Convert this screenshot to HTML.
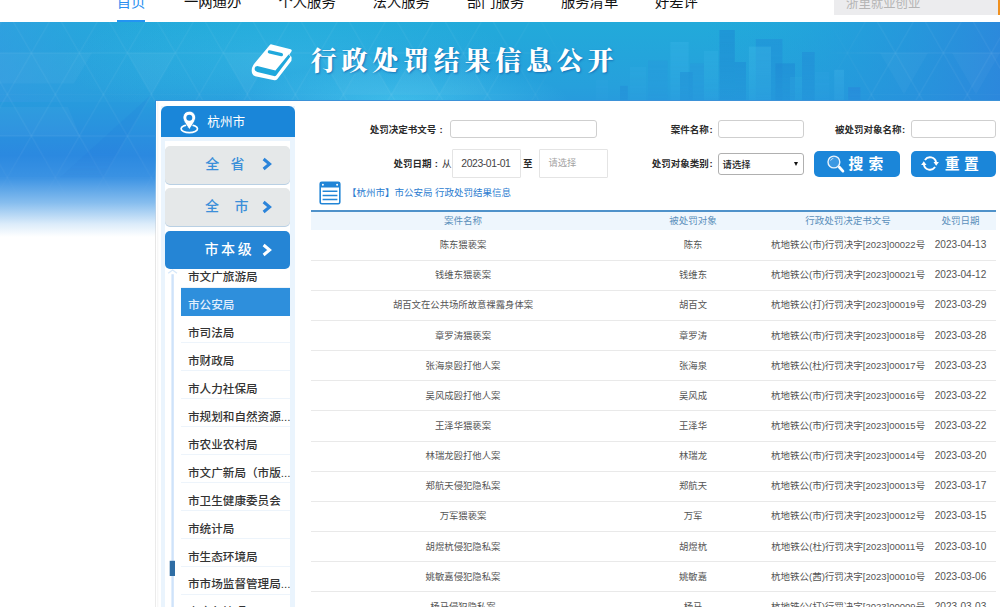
<!DOCTYPE html>
<html lang="zh-CN">
<head>
<meta charset="utf-8">
<title>行政处罚结果信息公开</title>
<style>
*{box-sizing:border-box;margin:0;padding:0}
html,body{width:1000px;height:607px;overflow:hidden;background:#fff}
body{position:relative;font-family:"Liberation Sans","Noto Sans CJK SC",sans-serif;color:#333;font-size:9.6px}
.abs{position:absolute}
/* top nav */
#nav{position:absolute;left:0;top:0;width:1000px;height:22px;background:#fff;overflow:hidden}
#nav a{position:absolute;top:-8.1px;font-size:14.3px;line-height:20px;color:#111;white-space:nowrap;text-decoration:none}
#nav a.on{color:#2b8ff0}
#nav .ul{position:absolute;left:117.1px;top:20.2px;width:27.8px;height:2px;background:#2394f2}
#nav .sbox{position:absolute;left:834px;top:-8.8px;width:164px;height:23.8px;background:#ececee;color:#b4b4b4;font-size:12.4px;line-height:23px;padding-left:12px;padding-top:2px}
#nav .obar{position:absolute;left:998px;top:0;width:2px;height:15px;background:#f0901e}
/* banner */
#banner{position:absolute;left:0;top:22px;width:1000px;height:215px;overflow:hidden}
#title{position:absolute;left:310.8px;top:39.2px;font-family:"Liberation Serif","Noto Serif CJK SC",serif;font-weight:900;font-size:26px;letter-spacing:4.75px;color:#fff;line-height:46px;white-space:nowrap;text-shadow:1px 1px 2px rgba(10,70,150,.55)}
/* panel */
#panel{position:absolute;left:156px;top:99.5px;width:860px;height:520px;background:#fff;border-top:1.5px solid #3d92d8;border-left:0}
/* sidebar */
#side{position:absolute;left:160.5px;top:106px;width:134px;height:520px;background:#eaf4fd}
#side .hd{position:absolute;left:0;top:0;width:134px;height:31px;background:#1a86d9;border-radius:6px 6px 0 0;color:#fff;font-size:12.6px;line-height:31px}
#side .hd span{position:absolute;left:46.8px;top:1.2px}
#side .in{position:absolute;left:4.5px;top:35px;width:125px;height:480px;background:#fff}
.lv{position:absolute;left:165px;width:125px;height:38px;border-radius:5px;background:#e5e8e9;box-shadow:0 1px 0 #b9d0e4;color:#3b8fd9;font-size:14px;line-height:38px;font-weight:500}
.lv.on{background:#2585d5;color:#fff;box-shadow:none}
.lv b{position:absolute;top:-1px;font-weight:500}
.lv svg{position:absolute;left:97px;top:12.6px;overflow:visible}
#list{position:absolute;left:181px;top:259.7px;width:109px}
#list div{height:27.92px;border-bottom:1px solid #edf4fb;padding:7.8px 0 0 7px;font-size:11.6px;line-height:19px;color:#333;white-space:nowrap;overflow:hidden;font-weight:500}
#list div.on{background:#2e8fdc;color:#e0eefc;border-bottom-color:#2e8fdc}
/* form */
.lab{position:absolute;font-size:9.5px;font-weight:700;color:#2b2b2b;white-space:nowrap;line-height:14px;text-align:right}
.lab i{font-style:normal;display:inline-block;width:3.8px;text-align:right}
.lab i.fw{width:9.5px;text-align:center}
.inp{position:absolute;height:18px;top:120.4px;border:1px solid #cfcfcf;border-radius:3px;background:#fff}
.dinp{position:absolute;top:149px;width:69px;height:29px;border:1px solid #e4e4e4;border-radius:1px;background:#fff;font-size:9.8px;line-height:27px;padding-left:8px;color:#444}
.btn{position:absolute;top:151px;height:25.6px;border-radius:5px;background:#1b86d9;color:#fff;font-weight:700;font-size:14.8px;line-height:25px}
.btn span{position:absolute;top:.6px}
/* table */
#tb{position:absolute;left:311px;top:210px;width:685px;border-collapse:collapse;table-layout:fixed;border-top:2px solid #4f92ca}
#tb th{height:18.4px;background:#eef6fd;color:#5a8fbb;font-weight:400;font-size:9.5px;text-align:center;padding:0;line-height:18px}
#tb td:nth-child(4){font-size:10.1px}
#tb td:nth-child(1),#tb td:nth-child(2){font-size:9.35px}
#tb td{height:30.17px;border-bottom:1px solid #e9e9e9;text-align:center;font-size:9.5px;color:#555;padding:0;white-space:nowrap;line-height:14px}
</style>
</head>
<body>
<div id="banner">
<svg width="1000" height="215" viewBox="0 0 1000 215">
<defs>
<linearGradient id="bg" x1="0" y1="0" x2="0" y2="1">
<stop offset="0" stop-color="#22aada"/><stop offset="0.3" stop-color="#26a0dc"/><stop offset="0.62" stop-color="#2b89e0"/><stop offset="0.72" stop-color="#3a92e3"/><stop offset="0.84" stop-color="#86bdee"/><stop offset="0.94" stop-color="#dcecfa"/><stop offset="1" stop-color="#ffffff"/>
</linearGradient>
<linearGradient id="bh" x1="0" y1="0" x2="1" y2="0">
<stop offset="0" stop-color="#3a98e4" stop-opacity=".5"/><stop offset="0.25" stop-color="#22acd8" stop-opacity="0"/><stop offset="0.7" stop-color="#1fa6dc" stop-opacity="0"/><stop offset="0.85" stop-color="#2493dc" stop-opacity=".45"/><stop offset="1" stop-color="#2d84dc" stop-opacity=".85"/>
</linearGradient>
<linearGradient id="fade" x1="0" y1="0" x2="0" y2="1">
<stop offset="0" stop-color="#fff" stop-opacity="1"/><stop offset="0.6" stop-color="#fff" stop-opacity="1"/><stop offset="0.85" stop-color="#fff" stop-opacity="0"/>
</linearGradient>
<pattern id="tri" x="31.4" y="31" width="48" height="83" patternUnits="userSpaceOnUse">
<path d="M0 0H48M0 83H48" stroke="#fff" stroke-opacity=".07" stroke-width="1" fill="none"/>
<path d="M0 0L48 83M48 0L0 83" stroke="#fff" stroke-opacity=".07" stroke-width="1" fill="none"/>
<path d="M0 41.5H48" stroke="#fff" stroke-opacity=".02" stroke-width="1" fill="none"/>
</pattern>
<linearGradient id="cg" x1="0" y1="0" x2="0" y2="1"><stop offset="0" stop-color="#fff"/><stop offset=".55" stop-color="#fff" stop-opacity=".8"/><stop offset="1" stop-color="#fff" stop-opacity=".35"/></linearGradient>
<mask id="cm"><rect x="580" y="0" width="320" height="80" fill="url(#cg)"/></mask>
<linearGradient id="pf" x1="0" y1="0" x2="1" y2="0"><stop offset="0" stop-color="#fff"/><stop offset=".5" stop-color="#fff"/><stop offset=".58" stop-color="#fff" stop-opacity="0"/><stop offset=".82" stop-color="#fff" stop-opacity="0"/><stop offset=".88" stop-color="#fff"/><stop offset="1" stop-color="#fff"/></linearGradient>
<mask id="pm"><rect width="1000" height="215" fill="url(#pf)"/></mask>
<mask id="fm"><rect width="1000" height="215" fill="url(#fade)"/></mask>
<radialGradient id="glow" cx="0.5" cy="0.5" r="0.5"><stop offset="0" stop-color="#4fd3f2" stop-opacity=".55"/><stop offset="1" stop-color="#4fd3f2" stop-opacity="0"/></radialGradient>
</defs>
<rect width="1000" height="215" fill="url(#bg)"/>
<rect width="1000" height="80" fill="url(#bh)"/>
<ellipse cx="400" cy="80" rx="170" ry="38" fill="url(#glow)"/>
<ellipse cx="290" cy="40" rx="230" ry="60" fill="url(#glow)" opacity=".45"/>
<g mask="url(#fm)">
<rect width="1000" height="215" fill="url(#tri)" mask="url(#pm)"/>
<path d="M0 31H92L74 61.5H0Z M0 85H68L80 114H0Z" fill="#fff" fill-opacity=".035"/>
<path d="M127.4 31L151.4 72.5L175.4 31Z M223.4 31L247.4 72.5L271.4 31Z M343.4 72.5L367.4 31L391.4 72.5Z M391.4 72.5L415.4 31L439.4 72.5Z" fill="#fff" fill-opacity=".04"/>
<path d="M319.4 31L343.4 72.5L367.4 31Z M439.4 72.5L463.4 31L487.4 72.5Z M880 31L904 72.5L928 31Z M952 31L976 72.5L1000 31Z" fill="#fff" fill-opacity=".03"/>
<path d="M151.4 72.5L103.4 155.5L60 155.5Z" fill="#1f6fd8" fill-opacity=".10"/>
</g>
<g id="city" mask="url(#cm)" opacity=".8">
<rect x="719.4" y="8" width="15.4" height="70" fill="#1b7fd0" fill-opacity=".55"/>
<rect x="755.8" y="17" width="26.6" height="61" fill="#2084d6" fill-opacity=".5"/>
<rect x="802" y="30" width="12.6" height="48" fill="#1f80d4" fill-opacity=".5"/>
<rect x="670.4" y="20" width="18.2" height="58" fill="#3fb6ea" fill-opacity=".4"/>
<rect x="648" y="38.6" width="19.6" height="39.4" fill="#2793db" fill-opacity=".45"/>
<rect x="680" y="50" width="12.8" height="28" fill="#1d7fd2" fill-opacity=".55"/>
<rect x="690" y="41.4" width="14" height="36.6" fill="#2a90dc" fill-opacity=".45"/>
<rect x="704" y="28.8" width="14" height="49.2" fill="#3cb7e8" fill-opacity=".35"/>
<rect x="734.8" y="40" width="11.2" height="38" fill="#1c7bd0" fill-opacity=".5"/>
<rect x="748.8" y="24.6" width="22.2" height="53.4" fill="#4cc3ee" fill-opacity=".35"/>
<rect x="775.4" y="41.4" width="19.6" height="36.6" fill="#1b78cf" fill-opacity=".5"/>
<rect x="834.2" y="47.8" width="9.8" height="30.2" fill="#4ab8ec" fill-opacity=".45"/>
<rect x="848.2" y="65.2" width="12.1" height="12.8" fill="#2a78d8" fill-opacity=".8"/>
<rect x="620" y="63.8" width="7.8" height="14.2" fill="#2079d2" fill-opacity=".6"/>
<rect x="630" y="45" width="16" height="33" fill="#3ab0e6" fill-opacity=".3"/>
<rect x="790" y="55" width="12" height="23" fill="#3ab0e6" fill-opacity=".3"/>
<rect x="815" y="50" width="14" height="28" fill="#3aa8e6" fill-opacity=".25"/>
<rect x="596" y="58" width="12" height="20" fill="#3aa8e6" fill-opacity=".3"/>
</g>
<g id="book" transform="translate(0,-22)">
<path d="M269.6 45.2Q270.3 44 271.8 44.4L290.6 49.3Q292.4 49.9 291.4 51.4L289.3 54.8L291.2 56.4Q291.7 56.9 291.6 58L291.5 60.2Q291.4 60.9 290.9 61.5L277.2 79.2Q276 80.6 274.4 80.3L255.2 76.3Q253 75.6 252.2 73.4Q250.8 69.4 253.2 65.3Q253.8 64.3 254.6 63.2Z" fill="#fff"/>
<path d="M257.3 66L275.4 70.6L288.6 54.4L290.4 56.6L276.3 75.2Q275.4 76.4 274 76.1L257.3 71.9Q254.6 71 254.6 68.9Q254.7 66.3 257.3 66Z" fill="#1fa8dc"/>
<path d="M269.4 51.9L281.4 54.6" fill="none" stroke="#1fa8dc" stroke-width="3.3" stroke-linecap="round"/>
</g>
</svg>
</div>
<div id="nav">
<a class="on" style="left:116.8px">首页</a>
<a style="left:184px">一网通办</a>
<a style="left:278.5px">个人服务</a>
<a style="left:372.6px">法人服务</a>
<a style="left:467px">部门服务</a>
<a style="left:561px">服务清单</a>
<a style="left:655px">好差评</a>
<div class="ul"></div>
<div class="sbox">浙里就业创业</div>
<div class="obar"></div>
</div>
<div id="title">行政处罚结果信息公开</div>
<div id="panel"></div><div class="abs" style="left:155.2px;top:99.5px;width:1.3px;height:510px;background:linear-gradient(#2b8ed8 0,#3f97dc 60px,#9ec6ea 100px,#e6e6e6 135px,#ebebeb 100%)"></div><div class="abs" style="left:156.5px;top:101px;width:2px;height:510px;background:linear-gradient(90deg,rgba(0,0,0,.045),rgba(0,0,0,0))"></div>
<div id="side">
<div class="hd"><svg style="position:absolute;left:18.4px;top:4px" width="21" height="25" viewBox="0 0 21 25"><ellipse cx="10.3" cy="18.8" rx="8.2" ry="3.9" fill="none" stroke="#fff" stroke-width="1.7"/><path d="M10.3 1.2C6.7 1.2 4 3.9 4 7.5C4 10.9 6.9 14 10.3 19.8C13.7 14 16.6 10.9 16.6 7.5C16.6 3.9 13.9 1.2 10.3 1.2Z" fill="#fff" stroke="#1a86d9" stroke-width=".9"/><circle cx="10.3" cy="7.7" r="3" fill="#1a86d9"/></svg><span>杭州市</span></div>
<div class="in"></div>
</div>
<div class="lv" style="top:145.6px"><b style="left:40.2px">全</b><b style="left:65.5px">省</b><svg width="10" height="12" viewBox="0 0 10 12"><path d="M1.6 1 L7.6 6 L1.6 11" fill="none" stroke="#2b84da" stroke-width="3"/></svg></div>
<div class="lv" style="top:188.4px"><b style="left:40px">全</b><b style="left:69.5px">市</b><svg width="10" height="12" viewBox="0 0 10 12"><path d="M1.6 1 L7.6 6 L1.6 11" fill="none" stroke="#2b84da" stroke-width="3"/></svg></div>
<div id="list">
<div>市文广旅游局</div>
<div class="on">市公安局</div>
<div>市司法局</div>
<div>市财政局</div>
<div>市人力社保局</div>
<div>市规划和自然资源...</div>
<div>市农业农村局</div>
<div>市文广新局（市版...</div>
<div>市卫生健康委员会</div>
<div>市统计局</div>
<div>市生态环境局</div>
<div>市市场监督管理局...</div>
<div>市应急管理局</div>
</div>
<svg class="abs" style="left:319px;top:180.5px" width="22" height="24" viewBox="0 0 22 24"><rect x="1.2" y="1.2" width="19.6" height="21.6" rx="1.6" fill="#fff" stroke="#2285d6" stroke-width="1.6"/><path d="M1.2 2.4Q1.2 1.2 2.4 1.2H19.6Q20.8 1.2 20.8 2.4V6.4H1.2Z" fill="#2285d6"/><circle cx="3.9" cy="3.7" r="1" fill="#fff"/><circle cx="18.1" cy="3.7" r="1" fill="#fff"/><path d="M3.6 10.2H18.4M3.6 14.4H18.4M3.6 18.6H18.4" stroke="#2285d6" stroke-width="1.5" fill="none"/></svg>
<svg class="abs" style="left:166px;top:268px" width="14" height="340" viewBox="0 0 14 340"><path d="M2.2 5.2L6.6 2L11 5.2" fill="none" stroke="#d6e8fa" stroke-width="1.4"/><rect x="5.4" y="6.2" width="2.4" height="334" fill="#cfe3fa"/><rect x="3.7" y="292.8" width="5.3" height="15.2" fill="#2e6da4"/></svg>
<div class="lv on" style="top:231px"><b style="left:39.5px;letter-spacing:2.6px">市本级</b><svg width="10" height="12" viewBox="0 0 10 12"><path d="M1.6 1 L7.6 6 L1.6 11" fill="none" stroke="#fff" stroke-width="3"/></svg></div>

<div class="lab" style="left:340px;width:105.8px;top:122.8px">处罚决定书文号<i class="fw">:</i></div>
<div class="inp" style="left:450.4px;width:146.6px"></div>
<div class="lab" style="left:612px;width:100.6px;top:122.8px">案件名称<i>:</i></div>
<div class="inp" style="left:718px;width:85.6px"></div>
<div class="lab" style="left:805px;width:100.2px;top:122.8px">被处罚对象名称<i>:</i></div>
<div class="inp" style="left:911px;width:84.6px"></div>

<div class="lab" style="left:340px;width:101px;top:156.5px">处罚日期<i class="fw">:</i></div>
<div class="lab" style="left:442px;top:156.5px;font-weight:400">从</div>
<div class="dinp" style="left:452.3px;font-size:10.4px;letter-spacing:-.4px">2023-01-01</div>
<div class="lab" style="left:523px;top:156.5px">至</div>
<div class="dinp" style="left:539.4px;color:#a3a3a3;font-size:9.3px">请选择</div>
<div class="lab" style="left:612px;width:100.6px;top:157.2px">处罚对象类别<i>:</i></div>
<div class="inp" style="left:718px;width:85.6px;top:152.6px;height:22.8px;border-color:#b0b0b0"><span style="position:absolute;left:3.5px;top:4px;font-size:9.4px;font-weight:500;color:#222;line-height:14px">请选择</span><span style="position:absolute;left:74.5px;top:8.2px;width:0;height:0;border-left:2.3px solid transparent;border-right:2.3px solid transparent;border-top:4.2px solid #111"></span></div>
<div class="btn" style="left:814.4px;width:85.2px"><svg style="position:absolute;left:11px;top:3px" width="22" height="20" viewBox="0 0 22 20"><circle cx="8.9" cy="8" r="5.9" fill="#3b98e2" stroke="#e8f3fc" stroke-width="1.4"/><path d="M5.6 6.6A3.6 3.6 0 0 1 8.4 4.3" fill="none" stroke="#cfe6f8" stroke-width=".9"/><path d="M14.4 13.2L17.9 17.1" stroke="#fff" stroke-width="2.8" stroke-linecap="round"/></svg><span style="left:34.2px">搜</span><span style="left:54.1px">索</span></div>
<div class="btn" style="left:911px;width:85px"><svg style="position:absolute;left:9px;top:3.25px" width="20" height="19" viewBox="0 0 20 19"><path d="M4.92 5.94A6.2 6.2 0 0 1 16.11 8.42" fill="none" stroke="#fff" stroke-width="1.9"/><path d="M15.08 13.06A6.2 6.2 0 0 1 3.89 10.58" fill="none" stroke="#fff" stroke-width="1.9"/><path d="M13.5 8L18.9 8L16.2 11.8Z" fill="#fff"/><path d="M1.1 11L6.5 11L3.8 7.2Z" fill="#fff"/></svg><span style="left:33.7px">重</span><span style="left:53.1px">置</span></div>

<div class="abs" style="left:351.4px;top:186.2px;font-size:9.5px;color:#2b7cd0;white-space:nowrap;line-height:14px"><span style="margin-left:-4.5px">【</span>杭州市】市公安局 行政处罚结果信息</div>

<table id="tb">
<colgroup><col style="width:304px"><col style="width:156px"><col style="width:154px"><col style="width:71px"></colgroup>
<tr><th>案件名称</th><th>被处罚对象</th><th>行政处罚决定书文号</th><th>处罚日期</th></tr>
<tr><td>陈东猥亵案</td><td>陈东</td><td>杭地铁公(市)行罚决字[2023]00022号</td><td>2023-04-13</td></tr>
<tr><td>钱维东猥亵案</td><td>钱维东</td><td>杭地铁公(市)行罚决字[2023]00021号</td><td>2023-04-12</td></tr>
<tr><td>胡百文在公共场所故意裸露身体案</td><td>胡百文</td><td>杭地铁公(打)行罚决字[2023]00019号</td><td>2023-03-29</td></tr>
<tr><td>章罗涛猥亵案</td><td>章罗涛</td><td>杭地铁公(市)行罚决字[2023]00018号</td><td>2023-03-28</td></tr>
<tr><td>张海泉殴打他人案</td><td>张海泉</td><td>杭地铁公(杜)行罚决字[2023]00017号</td><td>2023-03-23</td></tr>
<tr><td>吴风成殴打他人案</td><td>吴风成</td><td>杭地铁公(市)行罚决字[2023]00016号</td><td>2023-03-22</td></tr>
<tr><td>王泽华猥亵案</td><td>王泽华</td><td>杭地铁公(市)行罚决字[2023]00015号</td><td>2023-03-22</td></tr>
<tr><td>林瑞龙殴打他人案</td><td>林瑞龙</td><td>杭地铁公(市)行罚决字[2023]00014号</td><td>2023-03-20</td></tr>
<tr><td>郑航天侵犯隐私案</td><td>郑航天</td><td>杭地铁公(市)行罚决字[2023]00013号</td><td>2023-03-17</td></tr>
<tr><td>万军猥亵案</td><td>万军</td><td>杭地铁公(市)行罚决字[2023]00012号</td><td>2023-03-15</td></tr>
<tr><td>胡煜杭侵犯隐私案</td><td>胡煜杭</td><td>杭地铁公(杜)行罚决字[2023]00011号</td><td>2023-03-10</td></tr>
<tr><td>姚敏嘉侵犯隐私案</td><td>姚敏嘉</td><td>杭地铁公(茜)行罚决字[2023]00010号</td><td>2023-03-06</td></tr>
<tr><td>杨马侵犯隐私案</td><td>杨马</td><td>杭地铁公(打)行罚决字[2023]00009号</td><td>2023-03-03</td></tr>
</table>
</body>
</html>
